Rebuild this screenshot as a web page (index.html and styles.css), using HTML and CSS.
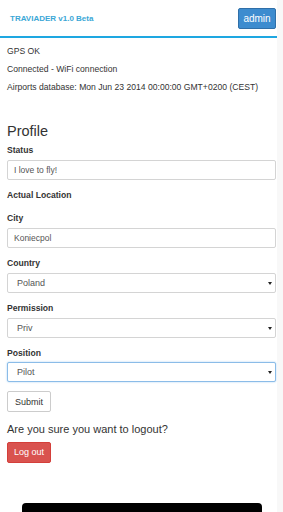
FILE: index.html
```html
<!DOCTYPE html>
<html lang="en">
<head>
  <meta charset="UTF-8">
  <meta name="viewport" content="width=device-width, initial-scale=1.0">
  <title>Traviader</title>
  <link rel="stylesheet" href="styles.css">
</head>
<body>
  <div class="page">
    <!-- Header -->
    <div class="navbar">
      <span class="brand">TRAVIADER v1.0 Beta</span>
      <button type="button" class="btn btn-admin">admin</button>
    </div>

    <div class="status-lines">
      <p>GPS OK</p>
      <p>Connected - WiFi connection</p>
      <p>Airports database: Mon Jun 23 2014 00:00:00 GMT+0200 (CEST)</p>
    </div>

    <!-- Profile form -->
    <h2>Profile</h2>
    <form class="profile-form">
      <label>Status</label>
      <input type="text" class="form-control" value="I love to fly!">

      <label class="section-label">Actual Location</label>

      <label>City</label>
      <input type="text" class="form-control" value="Koniecpol">

      <label>Country</label>
      <div class="select-wrap">
        <select class="form-control">
          <option>Poland</option>
        </select>
      </div>

      <label>Permission</label>
      <div class="select-wrap">
        <select class="form-control">
          <option>Priv</option>
        </select>
      </div>

      <label class="tight">Position</label>
      <div class="select-wrap">
        <select class="form-control focused">
          <option>Pilot</option>
        </select>
      </div>

      <button type="button" class="btn btn-default">Submit</button>
    </form>

    <p class="logout-question">Are you sure you want to logout?</p>
    <button type="button" class="btn btn-danger">Log out</button>
  </div>
  <div class="bottom-bar"></div>
</body>
</html>
```

FILE: styles.css
```css
html {
  background-color: #f8f8f8;
}
body {
  margin: 0;
  width: 277px;
  height: 512px;
  background-color: #fff;
  font-family: "Liberation Sans", Arial, sans-serif;
  color: #333;
  position: relative;
  overflow: hidden;
}
.navbar {
  display: flex;
  align-items: center;
  justify-content: space-between;
  height: 36px;
  padding: 0 1px 0 10px;
  border-bottom: 2px solid #1ea7e1;
}
.brand {
  color: #3ba7d6;
  font-size: 8px;
  font-weight: bold;
}
.btn {
  font-family: "Liberation Sans", Arial, sans-serif;
  font-size: 9px;
  height: 21px;
  padding: 0 6px;
  border-radius: 2px;
  cursor: pointer;
}
.btn-admin {
  background-color: #3d8ccf;
  border: 1px solid #2f6fa8;
  color: #fff;
  font-size: 10px;
  width: 38px;
  padding: 0;
  margin-top: 1px;
}
.status-lines {
  padding: 0 7px;
  font-size: 8.6px;
}
.status-lines p {
  margin: 0;
  height: 18px;
  line-height: 18px;
}
.status-lines p:first-child {
  margin-top: 4px;
}
h2 {
  margin: 26px 7px 5px;
  font-size: 14.5px;
  font-weight: normal;
  line-height: 18px;
}
.profile-form {
  display: flex;
  flex-direction: column;
  align-items: flex-start;
  padding: 0 1px 0 7px;
}
.profile-form label {
  font-size: 8.6px;
  font-weight: bold;
  line-height: 11px;
  margin-bottom: 4px;
}
.profile-form label.tight {
  margin-bottom: 3px;
}
.profile-form .section-label {
  margin-top: 0;
  margin-bottom: 12px;
}
.form-control {
  display: block;
  box-sizing: border-box;
  width: 100%;
  height: 20px;
  margin: 0 0 10px;
  padding: 0 6px;
  border: 1px solid #d4d4d4;
  border-radius: 2px;
  background-color: #fff;
  font-family: "Liberation Sans", Arial, sans-serif;
  font-size: 8.5px;
  color: #555;
}
.select-wrap {
  position: relative;
  width: 100%;
}
.select-wrap::after {
  content: "";
  position: absolute;
  right: 4px;
  top: 9px;
  border-left: 2px solid transparent;
  border-right: 2px solid transparent;
  border-top: 3px solid #222;
  pointer-events: none;
}
select.form-control {
  appearance: none;
  -webkit-appearance: none;
  padding-left: 9px;
  font-size: 9px;
}
.focused {
  border-color: #8bbce8;
  outline: none;
  box-shadow: 0 0 2px rgba(102, 175, 233, 0.6);
  margin-bottom: 9px;
}
.btn-default {
  background-color: #fff;
  border: 1px solid #ccc;
  color: #333;
  height: 21px;
  padding: 0 7px;
  margin-bottom: 8px;
}
.logout-question {
  margin: 0 7px 3px;
  font-size: 11px;
  line-height: 18px;
}
.btn-danger {
  margin-left: 7px;
  background-color: #d9534f;
  border: 1px solid #d43f3a;
  color: #fff;
  width: 44px;
  padding: 0;
}
.bottom-bar {
  position: absolute;
  left: 22px;
  bottom: 0;
  width: 240px;
  height: 9px;
  background-color: #000;
  border-radius: 4px 4px 0 0;
}
```
